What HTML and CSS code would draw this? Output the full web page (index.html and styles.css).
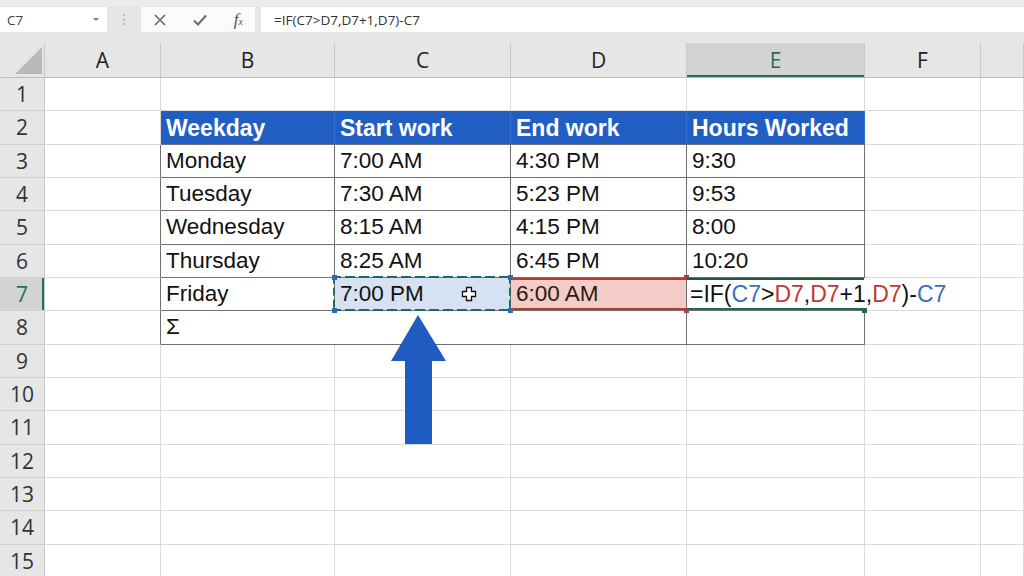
FILE: index.html
```html
<!DOCTYPE html>
<html lang="en">

<head>
	<meta charset="UTF-8">
	<title>Hours Worked</title>
	<link rel="stylesheet" href="styles.css">
</head>

<body>
	<!-- Name box + formula bar -->
	<div class="toolbar">
		<div class="namebox"><span>C7</span><span class="caret"></span></div>
		<div class="grip"></div>
		<div class="fbuttons">
			<svg width="12" height="12" viewBox="0 0 12 12"><path d="M1 1L11 11M11 1L1 11" stroke="#6a6a6a" stroke-width="1.6" fill="none"/></svg>
			<svg width="14" height="12" viewBox="0 0 14 12"><path d="M1 6.5L5 10.5L13 1.5" stroke="#6a6a6a" stroke-width="2" fill="none"/></svg>
			<span class="fx">f<small>x</small></span>
		</div>
		<div class="formula">=IF(C7&gt;D7,D7+1,D7)-C7</div>
	</div>

	<!-- Worksheet -->
	<div class="sheet">
		<div class="c ch"><div class="corner"></div></div>
		<div class="c ch">A</div>
		<div class="c ch">B</div>
		<div class="c ch">C</div>
		<div class="c ch">D</div>
		<div class="c ch sel-col">E</div>
		<div class="c ch">F</div>
		<div class="c ch"></div>

		<div class="c rh">1</div>
		<div class="c"></div><div class="c"></div><div class="c"></div><div class="c"></div><div class="c"></div><div class="c"></div><div class="c"></div>

		<div class="c rh">2</div>
		<div class="c"></div>
		<div class="c th">Weekday</div>
		<div class="c th">Start work</div>
		<div class="c th">End work</div>
		<div class="c th">Hours Worked</div>
		<div class="c"></div><div class="c"></div>

		<div class="c rh">3</div>
		<div class="c tl"></div>
		<div class="c t">Monday</div>
		<div class="c t">7:00 AM</div>
		<div class="c t">4:30 PM</div>
		<div class="c t">9:30</div>
		<div class="c"></div><div class="c"></div>

		<div class="c rh">4</div>
		<div class="c tl"></div>
		<div class="c t">Tuesday</div>
		<div class="c t">7:30 AM</div>
		<div class="c t">5:23 PM</div>
		<div class="c t">9:53</div>
		<div class="c"></div><div class="c"></div>

		<div class="c rh">5</div>
		<div class="c tl"></div>
		<div class="c t">Wednesday</div>
		<div class="c t">8:15 AM</div>
		<div class="c t">4:15 PM</div>
		<div class="c t">8:00</div>
		<div class="c"></div><div class="c"></div>

		<div class="c rh">6</div>
		<div class="c tl"></div>
		<div class="c t">Thursday</div>
		<div class="c t">8:25 AM</div>
		<div class="c t">6:45 PM</div>
		<div class="c t">10:20</div>
		<div class="c"></div><div class="c"></div>

		<div class="c rh sel-row">7</div>
		<div class="c tl"></div>
		<div class="c t">Friday</div>
		<div class="c t ref-c">
			7:00 PM
			<span class="marquee"></span>
			<span class="h h-tl"></span><span class="h h-tr"></span><span class="h h-bl"></span><span class="h h-br"></span>
			<svg class="cursor" width="16" height="16" viewBox="0 0 16 16"><path d="M5.5 1.5h5v4h4v5h-4v4h-5v-4h-4v-5h4z" fill="#fff" stroke="#111" stroke-width="1.3"/></svg>
		</div>
		<div class="c t ref-d">
			6:00 AM
			<span class="h r h-tr"></span><span class="h r h-br"></span>
		</div>
		<div class="c t active">=IF(<span class="blue">C7</span>&gt;<span class="red">D7</span>,<span class="red">D7</span>+1,<span class="red">D7</span>)-<span class="blue">C7</span><span class="h g h-br"></span></div>
		<div class="c"></div><div class="c"></div>

		<div class="c rh">8</div>
		<div class="c tl"></div>
		<div class="c t span3">Σ</div>
		<div class="c t"></div>
		<div class="c"></div><div class="c"></div>

		<div class="c rh">9</div>
		<div class="c"></div><div class="c"></div><div class="c"></div><div class="c"></div><div class="c"></div><div class="c"></div><div class="c"></div>
		<div class="c rh">10</div>
		<div class="c"></div><div class="c"></div><div class="c"></div><div class="c"></div><div class="c"></div><div class="c"></div><div class="c"></div>
		<div class="c rh">11</div>
		<div class="c"></div><div class="c"></div><div class="c"></div><div class="c"></div><div class="c"></div><div class="c"></div><div class="c"></div>
		<div class="c rh">12</div>
		<div class="c"></div><div class="c"></div><div class="c"></div><div class="c"></div><div class="c"></div><div class="c"></div><div class="c"></div>
		<div class="c rh">13</div>
		<div class="c"></div><div class="c"></div><div class="c"></div><div class="c"></div><div class="c"></div><div class="c"></div><div class="c"></div>
		<div class="c rh">14</div>
		<div class="c"></div><div class="c"></div><div class="c"></div><div class="c"></div><div class="c"></div><div class="c"></div><div class="c"></div>
		<div class="c rh">15</div>
		<div class="c"></div><div class="c"></div><div class="c"></div><div class="c"></div><div class="c"></div><div class="c"></div><div class="c"></div>
	</div>

	<!-- Annotation arrow pointing at C7 -->
	<svg class="arrow" width="56" height="130" viewBox="0 0 56 130">
		<polygon points="27,0 55,46 41,46 41,129 14,129 14,46 0,46" fill="#1f5bc0"/>
	</svg>
</body>

</html>
```

FILE: styles.css
```css
body {
	margin: 0;
	width: 1024px;
	height: 576px;
	overflow: hidden;
	position: relative;
	background-color: #ffffff;
	font-family: "Liberation Sans", Arial, sans-serif;
}

/* Formula bar */
.toolbar {
	height: 43px;
	box-sizing: border-box;
	padding-top: 1px;
	display: flex;
	align-items: flex-start;
	background-color: #e6e6e6;
	border-top: 6px solid #ececec;
	font-family: "Open Sans", "Noto Sans", sans-serif;
	font-size: 13.5px;
	color: #444;
}

.namebox {
	width: 107px;
	height: 25px;
	box-sizing: border-box;
	padding: 0 8px 0 7px;
	display: flex;
	align-items: center;
	justify-content: space-between;
	background-color: #ffffff;
}

.caret {
	width: 0;
	height: 0;
	border-left: 3px solid transparent;
	border-right: 3px solid transparent;
	border-top: 3px solid #777;
}

.grip {
	width: 0;
	height: 11px;
	margin: 7px 16px 0 16px;
	border-left: 2px dotted #b8b8b8;
}

.fbuttons {
	width: 114px;
	height: 25px;
	box-sizing: border-box;
	padding: 0 12px 0 13px;
	display: flex;
	align-items: center;
	justify-content: space-between;
	background-color: #fbfbfb;
}

.fx {
	font-family: "Liberation Serif", serif;
	font-style: italic;
	font-size: 17px;
	color: #555;
}

.fx small {
	font-size: 10px;
}

.formula {
	flex: 1;
	height: 25px;
	margin-left: 6px;
	padding-left: 13px;
	display: flex;
	align-items: center;
	background-color: #ffffff;
	color: #333;
}

/* Grid */
.sheet {
	display: grid;
	grid-template-columns: 45px 116px 174px 176px 176px 178px 116px 1fr;
	grid-template-rows: 35px repeat(15, 33.33px);
}

.c {
	position: relative;
	box-sizing: border-box;
	display: flex;
	align-items: center;
	padding-left: 5px;
	border-right: 1px solid #dadada;
	border-bottom: 1px solid #dadada;
	font-size: 22.5px;
	color: #111;
	white-space: nowrap;
}

.ch {
	justify-content: center;
	padding: 0;
	background-color: #e6e6e6;
	border-right-color: #c8c8c8;
	border-bottom-color: #bcbcbc;
	font-family: "Open Sans", "Noto Sans", sans-serif;
	font-size: 21px;
	color: #222;
}

.rh {
	justify-content: center;
	padding: 0;
	background-color: #e6e6e6;
	border-right-color: #c8c8c8;
	border-bottom-color: #d0d0d0;
	font-family: "Open Sans", "Noto Sans", sans-serif;
	font-size: 21px;
	color: #333;
}

.corner {
	width: 27px;
	height: 27px;
	margin: auto 2px 3px auto;
	background-color: #b9b9b9;
	clip-path: polygon(100% 0, 100% 100%, 0 100%);
}

.sel-col {
	background-color: #d3d3d3;
	box-shadow: inset 0 -2px 0 #217346;
	color: #217346;
}

.sel-row {
	background-color: #d3d3d3;
	box-shadow: inset -2px 0 0 #217346;
	color: #217346;
}

/* Table B2:E8 */
.th {
	background-color: #215ec4;
	color: #ffffff;
	font-weight: bold;
	font-size: 23px;
	padding-top: 2px;
	border-right-color: #3b6dcb;
	border-bottom-color: #6f6f6f;
}

.t {
	border-right-color: #6f6f6f;
	border-bottom-color: #6f6f6f;
}

.tl {
	border-right-color: #6f6f6f;
}

.span3 {
	grid-column: span 3;
}

/* Formula references */
.ref-c {
	background-color: #d6e1f3;
}

.marquee {
	position: absolute;
	top: -2px;
	left: -2px;
	right: -1px;
	bottom: -1px;
	background:
		linear-gradient(90deg, #1f6b56 68%, transparent 0) top / 14px 2px repeat-x,
		linear-gradient(90deg, #1f6b56 68%, transparent 0) bottom / 14px 2px repeat-x,
		linear-gradient(180deg, #1f6b56 68%, transparent 0) left / 2px 12px repeat-y,
		linear-gradient(180deg, #1f6b56 68%, transparent 0) right / 2px 12px repeat-y;
}

.cursor {
	position: absolute;
	left: 126px;
	top: 8px;
}

.ref-d {
	background-color: #f3cbc7;
	box-shadow: inset 0 2px 0 #b23b33, inset 0 -2px 0 #b23b33;
	color: #2a1a18;
}

.active {
	z-index: 2;
	padding-left: 3px;
	font-size: 23px;
	border-right-color: transparent;
	box-shadow: inset 0 2px 0 #24553e, inset 0 -2px 0 #1e6b46;
}

.blue {
	color: #3a70b8;
}

.red {
	color: #c03a30;
}

.h {
	position: absolute;
	width: 5px;
	height: 5px;
	background-color: #3264b8;
}

.h.r {
	background-color: #b23b33;
}

.h.g {
	background-color: #1e6b46;
}

.h-tl { top: -3px; left: -3px; }
.h-tr { top: -3px; right: -3px; }
.h-bl { bottom: -3px; left: -3px; }
.h-br { bottom: -3px; right: -3px; }

.arrow {
	position: absolute;
	left: 391px;
	top: 315px;
}
```
